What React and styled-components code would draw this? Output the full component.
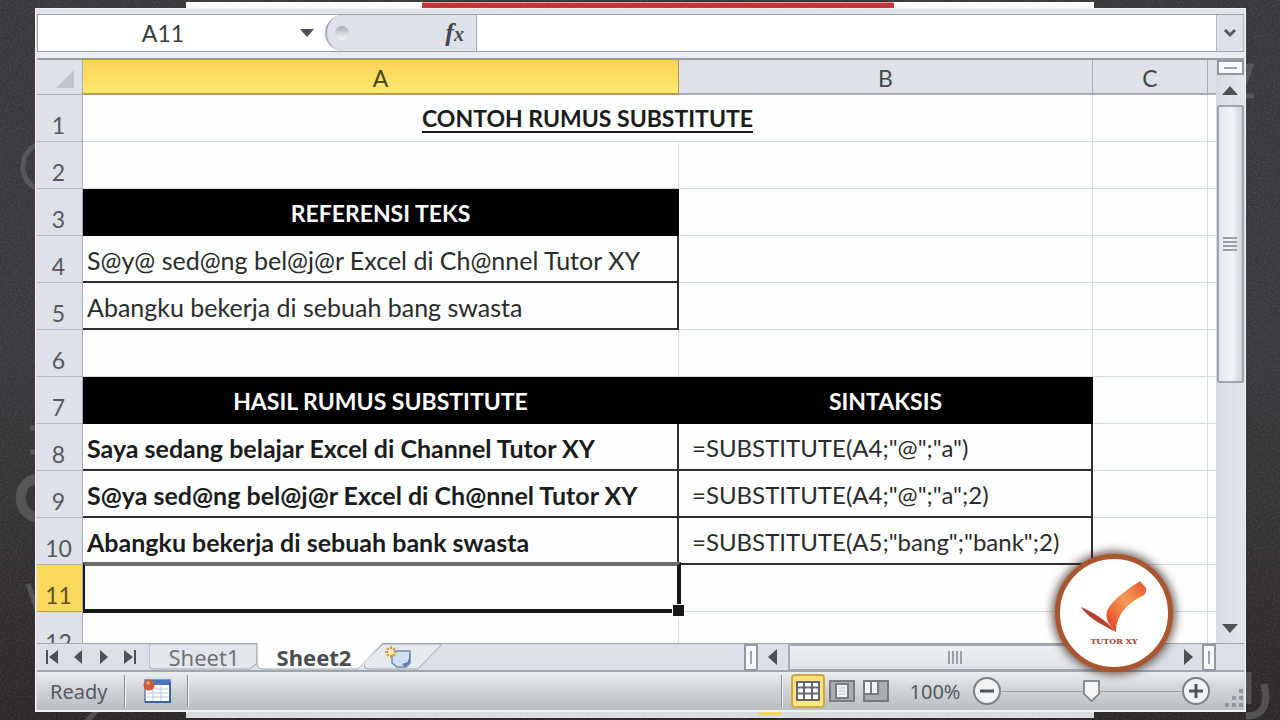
import React from "react";
import styled, { createGlobalStyle, css } from "styled-components";

const GlobalStyle = createGlobalStyle`
  * {
    box-sizing: border-box;
  }
  body {
    margin: 0;
    background: #353337;
  }
  button, input {
    margin: 0;
    padding: 0;
    border: 0;
    background: none;
    font: inherit;
    color: inherit;
  }
`;

const Page = styled.div`
  position: relative;
  display: flex;
  flex-direction: column;
  height: 100vh;
  padding: 2px 34px 2px 35px;
  overflow: hidden;
  background: linear-gradient(180deg, #39373b 0%, #3a383c 50%, #2b2728 100%);
  font-family: Lato, "Liberation Sans", sans-serif;
`;

const Chalkboard = styled.svg`
  position: absolute;
  inset: 0;
  width: 100%;
  height: 100%;
`;

const BackStrip = styled.div`
  position: relative;
  display: flex;
  height: 6px;
  margin: 0 152px 0 151px;
  background: ${(p) => (p.$bottom ? "#d9dddf" : "#fbfbfb")};
`;

const RedBar = styled.div`
  width: 52%;
  height: 6px;
  margin-left: 26%;
  border-top: 1px solid #ef9a98;
  background: #c4373a;
`;

const YellowTip = styled.div`
  width: 24px;
  height: 3px;
  margin-left: 63%;
  border-radius: 0 0 4px 4px;
  background: #f3d75f;
`;

const Window = styled.main`
  position: relative;
  display: flex;
  flex: 1;
  flex-direction: column;
  min-height: 0;
  padding: 0 1px;
  border: 1px solid #eff1f3;
  border-bottom-width: 2px;
  background: #dfe3e9;
  color: #3c3d40;
`;

const FormulaBar = styled.div`
  display: flex;
  flex: none;
  height: 38px;
  margin-top: 5px;
  border: 1px solid #989fa8;
  border-right: 0;
  background: #fff;
`;

const NameInput = styled.input`
  width: 250px;
  text-align: center;
  font-size: 23px;
  color: #3b3b3b;
`;

const NameArrow = styled.button`
  display: flex;
  align-items: center;
  justify-content: center;
  width: 37px;
`;

const FxArea = styled.div`
  display: flex;
  align-items: center;
  justify-content: space-between;
  width: 152px;
  padding: 0 12px 0 8px;
  border: 1px solid #a4aab2;
  border-width: 0 1px 0 2px;
  border-radius: 20px 0 0 20px;
  background: #dde1e8;
`;

const Knob = styled.span`
  width: 14px;
  height: 14px;
  border-radius: 50%;
  background: linear-gradient(180deg, #a9aeb5, #f6f7f9);
`;

const FxButton = styled.button`
  font: italic bold 26px/28px "Liberation Serif", serif;
  color: #46474a;
  small {
    font-size: 20px;
  }
`;

const FormulaInput = styled.input`
  flex: 1;
  min-width: 0;
  padding: 0 8px;
  font-size: 23px;
`;

const ExpandButton = styled.button`
  display: flex;
  align-items: center;
  justify-content: center;
  width: 28px;
  border: 1px solid #b3b9c1;
  border-width: 0 1px;
  background: #dde1e7;
`;

const Divider = styled.div`
  flex: none;
  height: 8px;
  border-bottom: 2px solid #989fa9;
  background: #e9ecf0;
`;

const Workspace = styled.div`
  display: flex;
  flex: 1;
  min-height: 0;
`;

const SheetView = styled.div`
  flex: 1;
  min-width: 0;
  overflow: hidden;
  background: #fdfefe;
`;

const Sheet = styled.table`
  width: 100%;
  table-layout: fixed;
  border-collapse: separate;
  border-spacing: 0;
  font-size: 25px;
  line-height: 30px;
`;

const Col = styled.col`
  width: ${(p) => p.$w};
`;

const ColHead = styled.th`
  height: 35px;
  padding: 2px 0 0;
  border-right: 1px solid #a6adb6;
  border-bottom: 2px solid #a6acb4;
  background: ${(p) =>
    p.$active ? "linear-gradient(180deg, #fcd255, #fbea70)" : "#dee2e8"};
  border-color: ${(p) => p.$active && "#b79a4c"};
  color: ${(p) => (p.$active ? "#4a4420" : "#45474a")};
  font-size: 23px;
  font-weight: 400;
  &:last-child {
    border-right: 0;
  }
`;

const Corner = styled.td`
  padding: 0 8px 6px 0;
  border-right: 1px solid #a6adb6;
  border-bottom: 1px solid #a6acb4;
  background: #dee2e8;
  vertical-align: bottom;
  text-align: right;
  line-height: 0;
`;

const RowHead = styled.th`
  height: 47px;
  padding: 0 2px 1px 0;
  border-right: 1px solid #a6adb6;
  border-bottom: 1px solid ${(p) => (p.$active ? "#b79a4c" : "#b0b6be")};
  background: ${(p) => (p.$active ? "#fbd95c" : "#dee2e8")};
  color: ${(p) => (p.$active ? "#5d5426" : "#55575a")};
  font-size: 23px;
  font-weight: 400;
  line-height: 30px;
  vertical-align: bottom;
`;

const Cell = styled.td`
  position: relative;
  height: 47px;
  padding: 2px 4px 0;
  border-right: 1px solid #d8dcdc;
  border-bottom: 1px solid #d8dcdc;
  color: #2b2b2b;
  white-space: nowrap;
  &:last-child {
    border-right: 0;
  }
  ${(p) =>
    p.$boxed &&
    css`
      border-right: 2px solid #2e2e2e;
      border-bottom: 2px solid #2e2e2e;
    `}
  ${(p) =>
    p.$formula &&
    css`
      padding-left: 13px;
      font-size: 24px;
    `}
  ${(p) =>
    p.$bold &&
    css`
      font-weight: 700;
      color: #1b1b1b;
    `}
  ${(p) =>
    p.$dark &&
    css`
      border-color: #000;
      background: #000;
      color: #fff;
      font-size: 23px;
      font-weight: 700;
      text-align: center;
    `}
  ${(p) =>
    p.$title &&
    css`
      padding: 0;
      color: #1b1b1b;
      font-size: 23px;
      font-weight: 700;
      text-align: center;
      text-decoration: underline;
      text-decoration-thickness: 2px;
      text-underline-offset: 4px;
    `}
`;

const Selection = styled.div`
  position: absolute;
  z-index: 1;
  inset: -3px -3px -2px 0;
  border: solid #161616;
  border-width: 4px 4px 4px 2px;
  border-top-color: #6c6c6c;
  &::after {
    content: "";
    position: absolute;
    right: -8px;
    bottom: -8px;
    width: 11px;
    height: 11px;
    border: 1px solid #fff;
    background: #161616;
  }
`;

const VScroll = styled.div`
  display: flex;
  flex: none;
  flex-direction: column;
  align-items: center;
  width: 28px;
  background: linear-gradient(90deg, #d6dae3, #e2e7eb);
`;

const SplitBox = styled.button`
  display: flex;
  flex: none;
  align-items: center;
  justify-content: center;
  width: ${(p) => (p.$vertical ? "14px" : "27px")};
  height: ${(p) => (p.$vertical ? "27px" : "15px")};
  border: 2px solid #9299a1;
  background: #f8f9fa;
  &::after {
    content: "";
    width: ${(p) => (p.$vertical ? "2px" : "13px")};
    height: ${(p) => (p.$vertical ? "13px" : "2px")};
    background: #a0a5ab;
  }
`;

const ScrollButton = styled.button`
  display: flex;
  flex: none;
  align-items: center;
  justify-content: center;
  width: 28px;
  height: 30px;
`;

const VThumb = styled.div`
  display: flex;
  flex-direction: column;
  align-items: center;
  justify-content: center;
  gap: 2px;
  width: 27px;
  height: 278px;
  margin-bottom: auto;
  border: 2px solid #9da4ac;
  border-radius: 2px;
  background: linear-gradient(90deg, #e3e8ee, #f2f5f8 60%, #ccd2d9);
  i {
    width: 14px;
    height: 2px;
    background: #9a9fa5;
  }
`;

const TabBar = styled.div`
  display: flex;
  flex: none;
  height: 29px;
  border-top: 1px solid #9da4ac;
  border-bottom: 2px solid #a0a6ae;
  background: #dbe0e7;
`;

const TabNav = styled.div`
  display: flex;
  align-items: center;
  width: 112px;
  padding: 0 6px 0 2px;
  button {
    flex: 1;
    line-height: 0;
  }
`;

const Tabs = styled.div`
  position: relative;
  display: flex;
  width: 298px;
`;

const TabShapes = styled.svg`
  position: absolute;
  left: 0;
  top: -1px;
`;

const Tab = styled.button`
  position: relative;
  width: ${(p) => (p.$active ? "112px" : "108px")};
  padding-left: 2px;
  font-family: "Noto Sans", "Open Sans", sans-serif;
  font-size: 22px;
  line-height: 26px;
  font-weight: ${(p) => (p.$active ? 700 : 400)};
  color: ${(p) => (p.$active ? "#4b4d50" : "#707377")};
`;

const NewTab = styled.button`
  position: relative;
  width: 58px;
  line-height: 0;
`;

const HScroll = styled.div`
  display: flex;
  align-items: center;
  width: 472px;
  margin-left: auto;
  margin-right: 28px;
`;

const HThumb = styled.div`
  display: flex;
  align-items: center;
  justify-content: center;
  gap: 2px;
  width: 334px;
  height: 27px;
  margin: 0 auto 0 2px;
  border: 2px solid #a4abb2;
  border-radius: 2px;
  background: linear-gradient(180deg, #eef2f4, #dde3e8);
  i {
    width: 2px;
    height: 13px;
    background: #9a9fa5;
  }
`;

const StatusBar = styled.footer`
  display: flex;
  flex: none;
  align-items: center;
  height: 38px;
  background: linear-gradient(180deg, #eceff1 0%, #d3d7db 40%, #b9bec3 100%);
  font-family: "Noto Sans", "Open Sans", sans-serif;
  font-size: 20px;
  color: #55585c;
`;

const Ready = styled.span`
  width: 87px;
  padding-left: 13px;
`;

const Separator = styled.span`
  width: 2px;
  height: 32px;
  border-left: 1px solid #8b9096;
  border-right: 1px solid #f0f2f3;
`;

const MacroButton = styled.button`
  width: 61px;
  line-height: 0;
`;

const Spacer = styled.span`
  flex: 1;
`;

const ViewButton = styled.button`
  display: flex;
  align-items: center;
  justify-content: center;
  width: 34px;
  height: 34px;
  border: 2px solid ${(p) => (p.$active ? "#d3a843" : "transparent")};
  border-radius: 4px;
  background: ${(p) => p.$active && "linear-gradient(180deg, #fadf78, #fbe98a)"};
`;

const ViewGroup = styled.div`
  display: flex;
  width: 115px;
  padding-left: 8px;
`;

const Zoom = styled.button`
  width: 74px;
  text-align: center;
`;

const ZoomButton = styled.button`
  display: flex;
  width: 30px;
  line-height: 0;
`;

const ZoomSlider = styled.input`
  appearance: none;
  width: 179px;
  height: 24px;
  background: linear-gradient(#9a9fa4, #9a9fa4) center / 100% 1px no-repeat;
  &::-webkit-slider-thumb {
    appearance: none;
    width: 17px;
    height: 22px;
    background: url("data:image/svg+xml,%3Csvg xmlns='http://www.w3.org/2000/svg' width='17' height='22'%3E%3Cpath d='M1 1H16V14L8.500 21L1 14Z' fill='%23f4f5f6' stroke='%2370757b' stroke-width='1.500'/%3E%3C/svg%3E");
  }
`;

const Grip = styled.svg`
  align-self: flex-end;
  margin: 0 0 1px 14px;
`;

const Badge = styled.div`
  position: absolute;
  right: 72px;
  bottom: 38px;
  display: flex;
  flex-direction: column;
  align-items: center;
  width: 118px;
  height: 118px;
  padding-top: 21px;
  border: 5px solid #a9552f;
  border-radius: 50%;
  background: #fff;
  box-shadow: 0 0 8px 3px rgba(60, 40, 30, 0.7);
  color: #b3402e;
  font: bold 8px/14px "DejaVu Serif", serif;
`;

const Arrow = ({ d, w = 16, h = 16 }) => (
  <svg width={w} height={h} viewBox={`0 0 ${w} ${h}`}>
    <path d={d} fill="#4d5054" />
  </svg>
);

const lines = (n) => Array.from({ length: n }, (_, i) => <i key={i} />);

const rows = [
  { title: "CONTOH RUMUS SUBSTITUTE" },
  {},
  { a: "REFERENSI TEKS", dark: true },
  { a: "S@y@ sed@ng bel@j@r Excel di Ch@nnel Tutor XY", boxed: true },
  { a: "Abangku bekerja di sebuah bang swasta", boxed: true },
  {},
  { a: "HASIL RUMUS SUBSTITUTE", b: "SINTAKSIS", dark: true },
  { a: "Saya sedang belajar Excel di Channel Tutor XY", b: '=SUBSTITUTE(A4;"@";"a")', boxed: true, bold: true },
  { a: "S@ya sed@ng bel@j@r Excel di Ch@nnel Tutor XY", b: '=SUBSTITUTE(A4;"@";"a";2)', boxed: true, bold: true },
  { a: "Abangku bekerja di sebuah bank swasta", b: '=SUBSTITUTE(A5;"bang";"bank";2)', boxed: true, bold: true },
  { selected: true },
  {},
];

function SheetRow({ row, number }) {
  return (
    <tr>
      <RowHead scope="row" $active={row.selected}>{number}</RowHead>
      {row.title ? (
        <Cell colSpan={2} $title>{row.title}</Cell>
      ) : (
        <>
          <Cell $dark={row.dark} $boxed={row.boxed} $bold={row.bold}>
            {row.a}
            {row.selected && <Selection />}
          </Cell>
          <Cell $dark={row.dark && row.b} $boxed={row.boxed && row.b} $formula={!row.dark}>
            {row.b}
          </Cell>
        </>
      )}
      <Cell />
      <Cell />
    </tr>
  );
}

function Logo() {
  return (
    <svg width="68" height="54" viewBox="0 0 68 54">
      <defs>
        <linearGradient id="tick" x1="1" y1="0" x2="0" y2="1">
          <stop offset="0" stopColor="#e2562b" />
          <stop offset="0.45" stopColor="#f59a55" />
          <stop offset="1" stopColor="#e23a1c" />
        </linearGradient>
      </defs>
      <path d="M1 27C11 31 26 40 36 52C24 46 8 38 1 27Z" fill="#b5402c" />
      <path d="M60 1L66 8Q67 12 64 15C52 21 36 32 36 52C28 44 25 38 27 31C33 18 50 8 60 1Z" fill="url(#tick)" />
    </svg>
  );
}

export default function App() {
  return (
    <Page>
      <GlobalStyle />
      <Chalkboard aria-hidden="true">
        <filter id="grain">
          <feTurbulence type="fractalNoise" baseFrequency="0.5" numOctaves="3" />
          <feColorMatrix values="0 0 0 0 1  0 0 0 0 1  0 0 0 0 1  0.5 0 0 0 -0.18" />
        </filter>
        <rect width="100%" height="100%" filter="url(#grain)" opacity="0.35" />
        <g fill="none" stroke="#6b696d" strokeWidth="5" opacity="0.6">
          <path d="M44 144C16 144 16 189 44 189" />
          <path d="M44 480C14 472 12 522 44 517" strokeWidth="10" />
          <path d="M30 428H40M30 452H40M28 584L40 618" />
          <path d="M99 708L86 722" />
          <path d="M1240 66H1251L1240 96H1254" />
          <path d="M1248 672V704M1264 684Q1272 716 1246 716" strokeWidth="7" />
        </g>
      </Chalkboard>
      <BackStrip><RedBar /></BackStrip>
      <Window>
        <FormulaBar>
          <NameInput aria-label="Name box" defaultValue="A11" />
          <NameArrow aria-label="Open name list"><Arrow w={14} h={8} d="M0 0H14L7 8Z" /></NameArrow>
          <FxArea>
            <Knob />
            <FxButton aria-label="Insert function">f<small>x</small></FxButton>
          </FxArea>
          <FormulaInput aria-label="Formula" />
          <ExpandButton aria-label="Expand formula bar">
            <svg width="14" height="10" viewBox="0 0 14 10">
              <path d="M2 2L7 7L12 2" fill="none" stroke="#55585c" strokeWidth="3" />
            </svg>
          </ExpandButton>
        </FormulaBar>
        <Divider />
        <Workspace>
          <SheetView>
            <Sheet>
              <colgroup>
                <Col $w="46px" />
                <Col $w="auto" />
                <Col $w="414px" />
                <Col $w="115px" />
                <Col $w="8px" />
              </colgroup>
              <thead>
                <tr>
                  <Corner>
                    <svg width="18" height="18"><path d="M18 0V18H0Z" fill="#bfc3cf" /></svg>
                  </Corner>
                  <ColHead scope="col" $active>A</ColHead>
                  <ColHead scope="col">B</ColHead>
                  <ColHead scope="col">C</ColHead>
                  <ColHead scope="col" />
                </tr>
              </thead>
              <tbody>
                {rows.map((row, i) => (
                  <SheetRow key={i} row={row} number={i + 1} />
                ))}
              </tbody>
            </Sheet>
          </SheetView>
          <VScroll>
            <SplitBox aria-label="Split rows" />
            <ScrollButton aria-label="Scroll up"><Arrow w={16} h={9} d="M8 0L16 9H0Z" /></ScrollButton>
            <VThumb>{lines(4)}</VThumb>
            <ScrollButton aria-label="Scroll down"><Arrow w={16} h={9} d="M0 0H16L8 9Z" /></ScrollButton>
          </VScroll>
        </Workspace>
        <TabBar>
          <TabNav>
            <button aria-label="First sheet"><Arrow w={12} h={14} d="M0 0H2V14H0ZM12 0V14L3 7Z" /></button>
            <button aria-label="Previous sheet"><Arrow w={8} h={14} d="M8 0V14L0 7Z" /></button>
            <button aria-label="Next sheet"><Arrow w={8} h={14} d="M0 0V14L8 7Z" /></button>
            <button aria-label="Last sheet"><Arrow w={12} h={14} d="M0 0V14L9 7ZM10 0H12V14H10Z" /></button>
          </TabNav>
          <Tabs>
            <TabShapes width="298" height="28" viewBox="0 0 298 28">
              <path d="M0 1V21Q0 26 5 26H101L108 20V1Z" fill="#e3e7eb" stroke="#a3a9b0" />
              <path d="M234 1H293L269 26H221Q213 26 216 19Z" fill="#e6e9ed" stroke="#a3a9b0" />
              <path d="M108 0H234L211 26H114Q108 26 108 20Z" fill="#fdfefe" />
              <path d="M108 0V20Q108 26 114 26H209L234 0" fill="none" stroke="#a3a9b0" />
            </TabShapes>
            <Tab>Sheet1</Tab>
            <Tab $active>Sheet2</Tab>
            <NewTab aria-label="Insert sheet">
              <svg width="28" height="24" viewBox="0 0 28 24">
                <path d="M8 6H26V18L22 22H13L8 18Z" fill="#d3e0f3" stroke="#7188b0" strokeWidth="1.5" />
                <path d="M26 8V17L21 22L18 19L24 17Z" fill="#5a76a8" />
                <path d="M7 1V13M1 7H13M3 3L11 11M11 3L3 11" stroke="#d99a3a" strokeWidth="2" />
                <circle cx="7" cy="7" r="3" fill="#fff0b8" />
              </svg>
            </NewTab>
          </Tabs>
          <HScroll>
            <SplitBox $vertical aria-label="Split columns" />
            <ScrollButton aria-label="Scroll left"><Arrow w={9} h={16} d="M9 0V16L0 8Z" /></ScrollButton>
            <HThumb>{lines(4)}</HThumb>
            <ScrollButton aria-label="Scroll right"><Arrow w={9} h={16} d="M0 0V16L9 8Z" /></ScrollButton>
            <SplitBox $vertical aria-label="Split pane" />
          </HScroll>
        </TabBar>
        <StatusBar>
          <Ready>Ready</Ready>
          <Separator />
          <MacroButton aria-label="Record macro">
            <svg width="28" height="26" viewBox="0 0 28 26">
              <rect x="2" y="2" width="25" height="22" fill="#fff" stroke="#5c7fbd" strokeWidth="1.500" />
              <path d="M2 2H27V7H2Z" fill="#4a74bd" />
              <path d="M4 11H25M4 15H25M4 19H25M10 8V23M18 8V23" stroke="#b9c9e3" strokeWidth="1" />
              <path d="M2 24H27V4" fill="none" stroke="#3c62a8" strokeWidth="2" />
              <circle cx="6" cy="7" r="5.500" fill="#cc5a3c" />
              <circle cx="5" cy="5" r="2" fill="#e9a184" />
            </svg>
          </MacroButton>
          <Separator />
          <Spacer />
          <Separator />
          <ViewGroup>
            <ViewButton $active aria-label="Normal view">
              <svg width="24" height="20" viewBox="0 0 24 20">
                <rect x="1" y="1" width="22" height="18" fill="#fff" stroke="#63666a" strokeWidth="2" />
                <path d="M1 6.500H23M1 12.500H23M8 1V19M16 1V19" stroke="#63666a" strokeWidth="2" />
              </svg>
            </ViewButton>
            <ViewButton aria-label="Page layout view">
              <svg width="26" height="22" viewBox="0 0 26 22">
                <rect x="1" y="1" width="24" height="20" fill="#a9aeb3" stroke="#777b80" strokeWidth="2" />
                <rect x="7" y="4" width="12" height="14" fill="#f3f4f5" stroke="#777b80" strokeWidth="2" />
                <path d="M10 8H16M10 11H16M10 14H16" stroke="#b4b8bc" />
              </svg>
            </ViewButton>
            <ViewButton aria-label="Page break preview">
              <svg width="26" height="22" viewBox="0 0 26 22">
                <rect x="1" y="1" width="24" height="20" fill="#a9aeb3" stroke="#777b80" strokeWidth="2" />
                <path d="M2 2H7V13H2ZM9 2H14V13H9Z" fill="#f8f9fa" />
                <path d="M8 2V14M1 14H15V2" fill="none" stroke="#777b80" strokeWidth="2" />
              </svg>
            </ViewButton>
          </ViewGroup>
          <Zoom>100%</Zoom>
          <ZoomButton aria-label="Zoom out">
            <svg width="30" height="30" viewBox="0 0 30 30">
              <circle cx="15" cy="15" r="13" fill="#f1f3f4" stroke="#7c8085" strokeWidth="2" />
              <path d="M8 15H22" stroke="#505357" strokeWidth="3" />
            </svg>
          </ZoomButton>
          <ZoomSlider type="range" min="10" max="190" defaultValue="100" aria-label="Zoom level" />
          <ZoomButton aria-label="Zoom in">
            <svg width="30" height="30" viewBox="0 0 30 30">
              <circle cx="15" cy="15" r="13" fill="#f1f3f4" stroke="#7c8085" strokeWidth="2" />
              <path d="M8 15H22M15 8V22" stroke="#505357" strokeWidth="3" />
            </svg>
          </ZoomButton>
          <Grip width="19" height="20" viewBox="0 0 19 20">
            <path d="M14 0H18V4H14ZM14 7H18V11H14ZM7 7H11V11H7ZM14 14H18V18H14ZM7 14H11V18H7ZM0 14H4V18H0Z" fill="#9298a0" />
          </Grip>
        </StatusBar>
        <Badge>
          <Logo />
          TUTOR XY
        </Badge>
      </Window>
      <BackStrip $bottom><YellowTip /></BackStrip>
    </Page>
  );
}
